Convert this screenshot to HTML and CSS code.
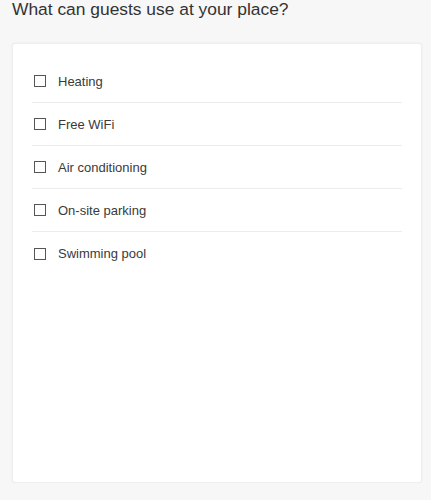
FILE: index.html
```html
<!DOCTYPE html>
<html lang="en">
<head>
    <meta charset="UTF-8">
    <meta name="viewport" content="width=device-width, initial-scale=1.0">
    <title>Amenities</title>
    <link rel="stylesheet" href="styles.css">
</head>
<body>
    <h1 class="title">What can guests use at your place?</h1>

    <div class="card">
        <label class="amenity">
            <span class="box"></span>
            <span class="amenity-name">Heating</span>
        </label>
        <label class="amenity">
            <span class="box"></span>
            <span class="amenity-name">Free WiFi</span>
        </label>
        <label class="amenity">
            <span class="box"></span>
            <span class="amenity-name">Air conditioning</span>
        </label>
        <label class="amenity">
            <span class="box"></span>
            <span class="amenity-name">On-site parking</span>
        </label>
        <label class="amenity">
            <span class="box"></span>
            <span class="amenity-name">Swimming pool</span>
        </label>
    </div>
</body>
</html>
```

FILE: styles.css
```css
* {
    margin: 0;
    padding: 0;
    box-sizing: border-box;
}

body {
    font-family: "Liberation Sans", Arial, sans-serif;
    background: #f7f7f7;
    color: #333;
    padding: 0 9px 0 12px;
}

.title {
    font-size: 17.4px;
    font-weight: normal;
    color: #333;
    line-height: 18px;
    margin-bottom: 25px;
}

.card {
    background: #fff;
    border-radius: 3px;
    box-shadow: 0 0 2px rgba(0, 0, 0, 0.08);
    border: 1px solid #efefef;
    height: 440px;
    padding: 16px 19px;
}

.amenity {
    display: flex;
    align-items: center;
    height: 43px;
    border-bottom: 1px solid #ececec;
    cursor: pointer;
}

.amenity:last-child {
    border-bottom: none;
}

.box {
    width: 12px;
    height: 12px;
    border: 1px solid #555;
    margin-left: 2px;
    margin-right: 12px;
}

.amenity-name {
    font-size: 13px;
    color: #3a3a3a;
}
```
